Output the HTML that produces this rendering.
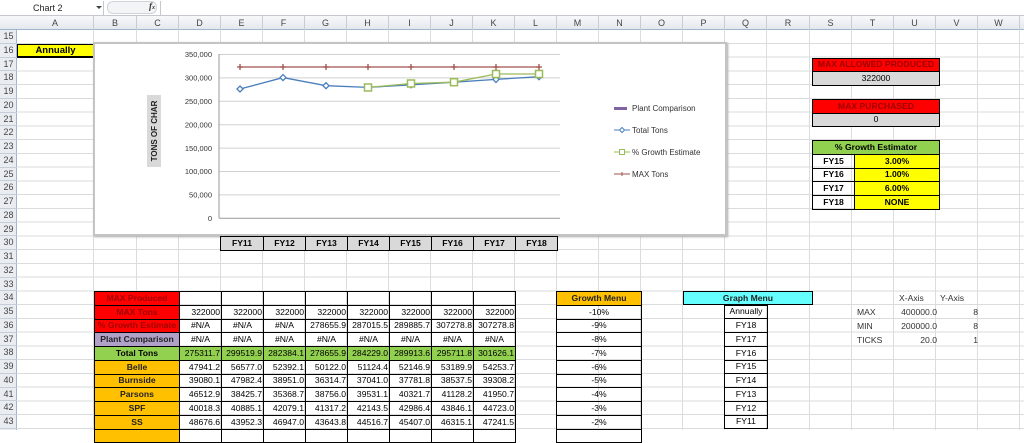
<!DOCTYPE html>
<html><head><meta charset="utf-8"><style>
*{margin:0;padding:0;box-sizing:border-box}
body{width:1024px;height:430px;overflow:hidden;background:#fff;font-family:"Liberation Sans",sans-serif;position:relative}
.abs{position:absolute}
#grid{left:17px;top:30px;width:1007px;height:400px;
background-image:repeating-linear-gradient(to bottom,transparent 0,transparent 12.75px,#dadcdd 12.75px,#dadcdd 13.75px);}
.vl{position:absolute;top:30px;height:400px;width:1px;background:#dadcdd}
#fbar{left:0;top:0;width:1024px;height:16px;background:#fff;border-bottom:1px solid #c5c9cf}
#chdr{left:0;top:16px;width:1024px;height:14px;background:linear-gradient(#f7f8fa,#e4e8ee);border-bottom:1px solid #9eb6ce}
.ch{position:absolute;top:0;height:14px;font-size:9px;color:#444;text-align:center;line-height:14px;border-right:1px solid #c5cdd6}
#rhdr{left:0;top:30px;width:17px;height:400px;background:#e9edf2;border-right:1px solid #9eb6ce}
.rh{position:absolute;left:0;width:17px;height:13.75px;font-size:9px;color:#444;text-align:center;line-height:13.75px;border-bottom:1px solid #c5cdd6}
table{border-collapse:collapse;position:absolute;font-size:8.6px;table-layout:fixed}
td{border:1px solid #000;height:13.75px;padding:0 1px;white-space:nowrap;overflow:hidden;line-height:11px}
.r{text-align:right}.c{text-align:center}.b{font-weight:bold}
.red{background:#f00;color:#a00000;font-weight:bold}
.org{background:#ffc000;color:#222;font-weight:bold;text-align:center}
.grn{background:#92d050}
.pur{background:#b1a0c7;font-weight:bold;text-align:center;color:#222}
.gry{background:#d9d9d9}
.yel{background:#ffff00}
.t{position:absolute;font-size:8.6px;color:#333}
</style></head><body>
<div class="abs" id="grid"></div>
<div id="vls"></div>
<div class="abs" id="fbar">
 <div class="abs" style="left:0;top:1px;width:104px;height:14px;border-right:1px solid #c5c9cf;font-size:9px;line-height:14px;padding-left:33px;color:#222">Chart 2</div>
 <div class="abs" style="left:96px;top:6px;width:0;height:0;border-left:3px solid transparent;border-right:3px solid transparent;border-top:3px solid #444"></div>
 <div class="abs" style="left:107px;top:1px;width:50px;height:13px;border:1px solid #d0d4da;border-radius:6px;background:#f3f4f6"></div>
 <div class="abs" style="left:149px;top:1px;font-size:9px;font-style:italic;font-family:'Liberation Serif',serif;font-weight:bold;color:#333">f<span style="font-size:6px">x</span></div>
 <div class="abs" style="left:160px;top:1px;width:864px;height:14px;border-left:1px solid #c5c9cf"></div>
</div>
<div class="abs" id="chdr"></div>
<div class="abs" id="rhdr"></div>

<div class="abs b" style="left:17px;top:43.75px;width:77px;height:14px;background:#ffff00;border:1px solid #000;border-bottom:2px solid #000;font-size:9.5px;text-align:center;line-height:12px">Annually</div>
<div class="abs" style="left:95px;top:45px;width:12px;height:11px;background:#f3f3f3;border:1px solid #aaa"></div>
<div class="abs" style="left:99px;top:49px;border-left:2px solid transparent;border-right:2px solid transparent;border-top:2px solid #444"></div>

<div class="abs" style="left:93px;top:42px;width:634px;height:194px;background:#fff;border:2px solid #c4c4c4;box-shadow:1px 1px 2px #aaa"></div>
<svg class="abs" style="left:0;top:0" width="1024" height="430">
 <g stroke="#d0d0d0" stroke-width="1">
  <line x1="219" y1="54.5" x2="560" y2="54.5"/><line x1="219" y1="77.9" x2="560" y2="77.9"/>
  <line x1="219" y1="101.3" x2="560" y2="101.3"/><line x1="219" y1="124.7" x2="560" y2="124.7"/>
  <line x1="219" y1="148.1" x2="560" y2="148.1"/><line x1="219" y1="171.5" x2="560" y2="171.5"/>
  <line x1="219" y1="194.9" x2="560" y2="194.9"/>
 </g>
 <line x1="219" y1="54" x2="219" y2="218" stroke="#999"/>
 <line x1="219" y1="218.3" x2="560" y2="218.3" stroke="#999"/>
 <g font-size="7.5" fill="#333" text-anchor="end" font-family="Liberation Sans">
  <text x="212" y="57">350,000</text><text x="212" y="80.5">300,000</text><text x="212" y="104">250,000</text>
  <text x="212" y="127.5">200,000</text><text x="212" y="151">150,000</text><text x="212" y="174">100,000</text>
  <text x="212" y="197.5">50,000</text><text x="212" y="221">0</text>
 </g>
 <rect x="147" y="95" width="14" height="72" fill="#d9d9d9"/>
 <text transform="translate(157,131) rotate(-90)" font-size="8" font-weight="bold" fill="#222" text-anchor="middle" font-family="Liberation Sans">TONS OF CHAR</text>
 <polyline fill="none" stroke="#a0504c" stroke-width="1.3" points="240,67 283,67 326,67 368,67 411,67 454,67 496,67 539,67"/>
 <g stroke="#a0504c" stroke-width="1.3">
  <path d="M237 67h6M240 64v6M280 67h6M283 64v6M323 67h6M326 64v6M365 67h6M368 64v6M408 67h6M411 64v6M451 67h6M454 64v6M493 67h6M496 64v6M536 67h6M539 64v6"/>
 </g>
 <polyline fill="none" stroke="#4a7ebb" stroke-width="1.3" points="240,89 283,77.6 326,85.7 368,87.4 411,84.8 454,82.2 496,79.4 539,76.7"/>
 <g fill="#fff" stroke="#4a7ebb" stroke-width="1.3">
  <path d="M240 86l3 3-3 3-3-3zM283 74.6l3 3-3 3-3-3zM326 82.7l3 3-3 3-3-3zM368 84.4l3 3-3 3-3-3zM411 81.8l3 3-3 3-3-3zM454 79.2l3 3-3 3-3-3zM496 76.4l3 3-3 3-3-3zM539 73.7l3 3-3 3-3-3z"/>
 </g>
 <polyline fill="none" stroke="#9bbb59" stroke-width="1.3" points="368,87.4 411,83.5 454,82.2 496,74 539,74"/>
 <g fill="#fff" stroke="#9bbb59" stroke-width="1.5">
  <rect x="364.5" y="84" width="7" height="7"/><rect x="407.5" y="80" width="7" height="7"/><rect x="450.5" y="78.7" width="7" height="7"/><rect x="492.5" y="70.5" width="7" height="7"/><rect x="535.5" y="70.5" width="7" height="7"/>
 </g>
 <rect x="614" y="107" width="13" height="3" fill="#8064a2"/>
 <text x="632" y="111" font-size="8" fill="#333" font-family="Liberation Sans">Plant Comparison</text>
 <line x1="614" y1="130" x2="630" y2="130" stroke="#4a7ebb"/><path d="M622 127.5l2.5 2.5-2.5 2.5-2.5-2.5z" fill="#fff" stroke="#4a7ebb"/>
 <text x="632" y="133" font-size="8" fill="#333" font-family="Liberation Sans">Total Tons</text>
 <line x1="614" y1="152" x2="630" y2="152" stroke="#9bbb59"/><rect x="619.5" y="149.5" width="5" height="5" fill="#fff" stroke="#9bbb59"/>
 <text x="632" y="155" font-size="8" fill="#333" font-family="Liberation Sans">% Growth Estimate</text>
 <line x1="614" y1="174" x2="630" y2="174" stroke="#a0504c"/><path d="M620 174h4M622 172v4" stroke="#a0504c"/>
 <text x="632" y="177" font-size="8" fill="#333" font-family="Liberation Sans">MAX Tons</text>
</svg>

<table style="left:220px;top:236px">
<tr>
<td class="gry b c" style="width:43px">FY11</td><td class="gry b c" style="width:42px">FY12</td><td class="gry b c" style="width:42px">FY13</td><td class="gry b c" style="width:42px">FY14</td><td class="gry b c" style="width:42px">FY15</td><td class="gry b c" style="width:42px">FY16</td><td class="gry b c" style="width:42px">FY17</td><td class="gry b c" style="width:42px">FY18</td>
</tr></table>

<table style="left:94px;top:291px">
<colgroup><col style="width:85px"><col style="width:42px"><col style="width:42px"><col style="width:42px"><col style="width:42px"><col style="width:42px"><col style="width:42px"><col style="width:42px"><col style="width:42px"></colgroup>
<tr><td class="red c">MAX Produced</td><td></td><td></td><td></td><td></td><td></td><td></td><td></td><td></td></tr>
<tr><td class="red c">MAX Tons</td><td class="r">322000</td><td class="r">322000</td><td class="r">322000</td><td class="r">322000</td><td class="r">322000</td><td class="r">322000</td><td class="r">322000</td><td class="r">322000</td></tr>
<tr><td class="red c">% Growth Estimate</td><td class="c">#N/A</td><td class="c">#N/A</td><td class="c">#N/A</td><td class="r">278655.9</td><td class="r">287015.5</td><td class="r">289885.7</td><td class="r">307278.8</td><td class="r">307278.8</td></tr>
<tr><td class="pur">Plant Comparison</td><td class="c">#N/A</td><td class="c">#N/A</td><td class="c">#N/A</td><td class="c">#N/A</td><td class="c">#N/A</td><td class="c">#N/A</td><td class="c">#N/A</td><td class="c">#N/A</td></tr>
<tr class="grn"><td class="b c">Total Tons</td><td class="r">275311.7</td><td class="r">299519.9</td><td class="r">282384.1</td><td class="r">278655.9</td><td class="r">284229.0</td><td class="r">289913.6</td><td class="r">295711.8</td><td class="r">301626.1</td></tr>
<tr><td class="org">Belle</td><td class="r">47941.2</td><td class="r">56577.0</td><td class="r">52392.1</td><td class="r">50122.0</td><td class="r">51124.4</td><td class="r">52146.9</td><td class="r">53189.9</td><td class="r">54253.7</td></tr>
<tr><td class="org">Burnside</td><td class="r">39080.1</td><td class="r">47982.4</td><td class="r">38951.0</td><td class="r">36314.7</td><td class="r">37041.0</td><td class="r">37781.8</td><td class="r">38537.5</td><td class="r">39308.2</td></tr>
<tr><td class="org">Parsons</td><td class="r">46512.9</td><td class="r">38425.7</td><td class="r">35368.7</td><td class="r">38756.0</td><td class="r">39531.1</td><td class="r">40321.7</td><td class="r">41128.2</td><td class="r">41950.7</td></tr>
<tr><td class="org">SPF</td><td class="r">40018.3</td><td class="r">40885.1</td><td class="r">42079.1</td><td class="r">41317.2</td><td class="r">42143.5</td><td class="r">42986.4</td><td class="r">43846.1</td><td class="r">44723.0</td></tr>
<tr><td class="org">SS</td><td class="r">48676.6</td><td class="r">43952.3</td><td class="r">46947.0</td><td class="r">43643.8</td><td class="r">44516.7</td><td class="r">45407.0</td><td class="r">46315.1</td><td class="r">47241.5</td></tr>
<tr><td class="org"></td><td></td><td></td><td></td><td></td><td></td><td></td><td></td><td></td></tr>
</table>

<table style="left:556px;top:291px">
<colgroup><col style="width:85px"></colgroup>
<tr><td class="org">Growth Menu</td></tr>
<tr><td class="c">-10%</td></tr><tr><td class="c">-9%</td></tr><tr><td class="c">-8%</td></tr><tr><td class="c">-7%</td></tr><tr><td class="c">-6%</td></tr><tr><td class="c">-5%</td></tr><tr><td class="c">-4%</td></tr><tr><td class="c">-3%</td></tr><tr><td class="c">-2%</td></tr><tr><td class="c"></td></tr>
</table>

<div class="abs b" style="left:683px;top:291px;width:130px;height:14px;background:#66ffff;border:1px solid #000;font-size:8.6px;text-align:center;line-height:12px;color:#222">Graph Menu</div>
<table style="left:724px;top:304.5px">
<colgroup><col style="width:43px"></colgroup>
<tr><td class="c">Annually</td></tr><tr><td class="c">FY18</td></tr><tr><td class="c">FY17</td></tr><tr><td class="c">FY16</td></tr><tr><td class="c">FY15</td></tr><tr><td class="c">FY14</td></tr><tr><td class="c">FY13</td></tr><tr><td class="c">FY12</td></tr><tr><td class="c">FY11</td></tr>
</table>

<div class="t" style="left:899px;top:293px">X-Axis</div>
<div class="t" style="left:940px;top:293px">Y-Axis</div>
<div class="t" style="left:857px;top:307px">MAX</div>
<div class="t" style="left:857px;top:321px">MIN</div>
<div class="t" style="left:857px;top:335px">TICKS</div>
<div class="t" style="left:880px;top:307px;width:57px;text-align:right">400000.0</div>
<div class="t" style="left:880px;top:321px;width:57px;text-align:right">200000.0</div>
<div class="t" style="left:880px;top:335px;width:57px;text-align:right">20.0</div>
<div class="t" style="left:940px;top:307px;width:38px;text-align:right">8</div>
<div class="t" style="left:940px;top:321px;width:38px;text-align:right">8</div>
<div class="t" style="left:940px;top:335px;width:38px;text-align:right">1</div>

<table style="left:812px;top:57.5px">
<colgroup><col style="width:127px"></colgroup>
<tr><td class="red c">MAX ALLOWED PRODUCED</td></tr>
<tr><td class="gry c">322000</td></tr>
</table>
<table style="left:812px;top:98.75px">
<colgroup><col style="width:127px"></colgroup>
<tr><td class="red c">MAX PURCHASED</td></tr>
<tr><td class="gry c">0</td></tr>
</table>
<table style="left:812px;top:140px">
<colgroup><col style="width:42px"><col style="width:85px"></colgroup>
<tr><td colspan="2" class="grn b c">% Growth Estimator</td></tr>
<tr><td class="b c">FY15</td><td class="yel b c">3.00%</td></tr>
<tr><td class="b c">FY16</td><td class="yel b c">1.00%</td></tr>
<tr><td class="b c">FY17</td><td class="yel b c">6.00%</td></tr>
<tr><td class="b c">FY18</td><td class="yel b c">NONE</td></tr>
</table>

<script>
var bounds=[17,94,137,179,221,263,305,347,389,431,473,515,557,599,641,683,725,767,810,852,894,936,978,1020];
var letters="ABCDEFGHIJKLMNOPQRSTUVW";
var ch=document.getElementById('chdr'),v=document.getElementById('vls'),rh=document.getElementById('rhdr');
for(var i=0;i<letters.length;i++){
 var d=document.createElement('div');d.className='ch';d.style.left=bounds[i]+'px';d.style.width=(bounds[i+1]-bounds[i])+'px';d.textContent=letters[i];ch.appendChild(d);
 var l=document.createElement('div');l.className='vl';l.style.left=(bounds[i+1]-1)+'px';v.appendChild(l);
}
for(var r=15;r<=43;r++){
 var d=document.createElement('div');d.className='rh';d.style.top=((r-15)*13.75)+'px';d.textContent=r;rh.appendChild(d);
}
</script>
</body></html>
